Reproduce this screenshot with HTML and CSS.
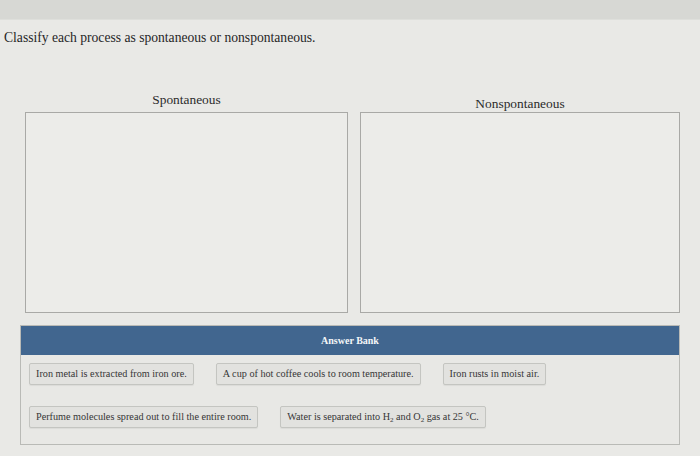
FILE: index.html
```html
<!DOCTYPE html>
<html lang="en">
<head>
<meta charset="utf-8">
<title>Classify processes</title>
<link rel="stylesheet" href="styles.css">
</head>
<body>
<div class="topbar"></div>
<p class="prompt">Classify each process as spontaneous or nonspontaneous.</p>

<div class="bins">
  <div class="bin bin-left">
    <div class="bin-label">Spontaneous</div>
    <div class="bin-box"></div>
  </div>
  <div class="bin bin-right">
    <div class="bin-label">Nonspontaneous</div>
    <div class="bin-box"></div>
  </div>
</div>

<section class="bank">
  <header class="bank-head">Answer Bank</header>
  <div class="bank-body">
    <div class="bank-row">
      <span class="chip">Iron metal is extracted from iron ore.</span>
      <span class="chip">A cup of hot coffee cools to room temperature.</span>
      <span class="chip">Iron rusts in moist air.</span>
    </div>
    <div class="bank-row">
      <span class="chip">Perfume molecules spread out to fill the entire room.</span>
      <span class="chip">Water is separated into H<sub>2</sub> and O<sub>2</sub> gas at 25 °C.</span>
    </div>
  </div>
</section>
</body>
</html>
```

FILE: styles.css
```css
html, body {
  margin: 0;
  padding: 0;
}

body {
  width: 700px;
  height: 456px;
  overflow: hidden;
  background: #e9e9e6;
  font-family: "Liberation Serif", "Times New Roman", serif;
  color: #2a2a2a;
}

.topbar {
  height: 19px;
  background: #d7d8d4;
  border-bottom: 1px solid #dedfdb;
}

.prompt {
  margin: 9px 0 0 4px;
  font-size: 13.6px;
  line-height: 18px;
  color: #262626;
}

.bins {
  display: grid;
  grid-template-columns: 323px 320px;
  column-gap: 12px;
  margin: 45px 0 0 25px;
}

.bin {
  display: flex;
  flex-direction: column;
}

.bin-label {
  text-align: center;
  font-size: 13.4px;
  line-height: 16px;
  color: #2b2b2b;
  margin-bottom: 4px;
}

.bin-right .bin-label {
  margin-top: 4px;
  margin-bottom: 0;
}

.bin-box {
  height: 199px;
  border: 1px solid #a9a9a6;
  background: #ecece9;
}

.bank {
  margin: 12px 20px 0 20px;
  border: 1px solid #b9bab6;
  background: #e8e8e5;
}

.bank-head {
  height: 29px;
  background: #41668f;
  color: #f4f6f8;
  font-weight: bold;
  font-size: 10px;
  line-height: 29px;
  text-align: center;
}

.bank-body {
  padding: 8px 8px 16px 8px;
  display: flex;
  flex-direction: column;
  gap: 21px;
}

.bank-row {
  display: flex;
  gap: 22px;
}

.chip {
  display: inline-block;
  padding: 3px 6px 4px 6px;
  font-size: 10.2px;
  line-height: 13px;
  color: #363636;
  background: #e2e2df;
  border: 1px solid #c4c5c1;
  border-radius: 2px;
  box-shadow: 0 1px 1px rgba(0, 0, 0, 0.06);
}

.chip sub {
  font-size: 7px;
  line-height: 0;
  vertical-align: -2px;
}
```
